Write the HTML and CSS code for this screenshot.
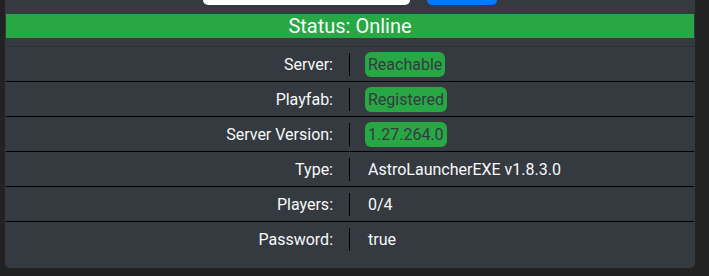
FILE: index.html
```html
<!DOCTYPE html>
<html lang="en">
<head>
    <meta charset="UTF-8">
    <meta name="viewport" content="width=device-width, initial-scale=1.0">
    <title>Server Status</title>
    <link rel="stylesheet" href="styles.css">
</head>
<body>
    <div class="panel">
        <!-- Connect form -->
        <div class="connect-form">
            <input type="text" class="connect-input">
            <button class="connect-btn" aria-label="Connect"></button>
        </div>

        <!-- Status -->
        <div class="status-bar">Status: Online</div>

        <div class="info-table">
            <div class="info-row">
                <div class="info-label">Server:</div>
                <div class="info-value"><span class="badge">Reachable</span></div>
            </div>
            <div class="info-row">
                <div class="info-label">Playfab:</div>
                <div class="info-value"><span class="badge">Registered</span></div>
            </div>
            <div class="info-row">
                <div class="info-label">Server Version:</div>
                <div class="info-value"><span class="badge">1.27.264.0</span></div>
            </div>
            <div class="info-row">
                <div class="info-label">Type:</div>
                <div class="info-value">AstroLauncherEXE v1.8.3.0</div>
            </div>
            <div class="info-row">
                <div class="info-label">Players:</div>
                <div class="info-value">0/4</div>
            </div>
            <div class="info-row">
                <div class="info-label">Password:</div>
                <div class="info-value">true</div>
            </div>
        </div>
    </div>
</body>
</html>
```

FILE: styles.css
```css
* {
    margin: 0;
    padding: 0;
    box-sizing: border-box;
}

body {
    font-family: Roboto, 'Liberation Sans', sans-serif;
    background: #222222;
    color: #f8f9fa;
    height: 100vh;
    overflow: hidden;
}

.panel {
    width: 690px;
    margin-left: 5px;
    margin-top: -33px;
    background: #343a40;
    border-radius: 0 0 5px 5px;
    padding: 0 1px 12px;
}

.connect-form {
    display: flex;
    justify-content: center;
    gap: 17px;
    margin-bottom: 9px;
}

.connect-input {
    width: 207px;
    height: 38px;
    background: white;
    border: none;
    border-radius: 5px;
    outline: none;
}

.connect-btn {
    width: 70px;
    height: 38px;
    background: #007bff;
    border: none;
    border-radius: 5px;
}

.status-bar {
    background: #28a745;
    color: #f8f9fa;
    text-align: center;
    font-size: 20px;
    line-height: 24px;
    height: 24px;
    margin-bottom: 8px;
}

.info-table {
    border-top: 1px solid #2b3036;
}

.info-row {
    display: grid;
    grid-template-columns: 1fr 1fr;
    align-items: center;
    height: 35px;
    border-bottom: 1px solid #000;
    font-size: 16px;
}

.info-row:last-child {
    border-bottom: none;
    height: 34px;
}

.info-label {
    text-align: right;
    padding-right: 16px;
    border-right: 1px solid #000;
    line-height: 23px;
}

.info-value {
    padding-left: 18px;
    line-height: 25px;
}

.badge {
    display: inline-block;
    margin-left: -3px;
    padding: 0 3px;
    background: #28a745;
    color: #343a40;
    border-radius: 6px;
    line-height: 25px;
}
```
